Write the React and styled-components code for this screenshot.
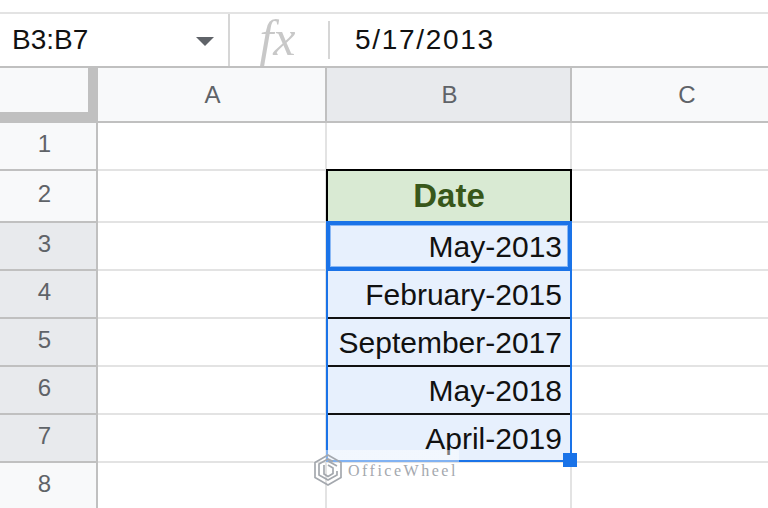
import styled, { createGlobalStyle, css } from 'styled-components';

const GlobalStyle = createGlobalStyle`
  html, body {
    margin: 0;
    height: 508px;
    overflow: hidden;
    background: #fff;
    font-family: "Liberation Sans", Arial, sans-serif;
  }
`;

const Page = styled.div`
  width: 768px;
  height: 508px;
  padding-top: 12px;
  box-sizing: border-box;
  overflow: hidden;
`;

const FormulaBar = styled.div`
  display: flex;
  align-items: center;
  height: 56px;
  box-sizing: border-box;
  border-top: 2px solid #e3e3e3;
  border-bottom: 2px solid #c0c0c0;
`;

const NameBox = styled.div`
  width: 230px;
  height: 100%;
  box-sizing: border-box;
  display: flex;
  align-items: center;
  justify-content: space-between;
  padding: 0 14px 0 12px;
  border-right: 2px solid #d6d6d6;
  font-size: 28px;
  color: #111;
`;

const Caret = styled.span`
  width: 0;
  height: 0;
  margin-top: 3px;
  border-left: 9px solid transparent;
  border-right: 9px solid transparent;
  border-top: 9px solid #5f6368;
`;

const FxLabel = styled.div`
  width: 100px;
  height: 38px;
  box-sizing: border-box;
  display: flex;
  align-items: center;
  justify-content: center;
  padding: 0 3px 5px 0;
  border-right: 2px solid #d6d6d6;
  font-family: "Liberation Serif", serif;
  font-style: italic;
  font-size: 50px;
  line-height: 38px;
  color: #c8c8c8;
`;

const FormulaValue = styled.div`
  padding-left: 25px;
  font-size: 28px;
  letter-spacing: 1.7px;
  color: #111;
`;

const Sheet = styled.div`
  position: relative;
  display: grid;
  grid-template-columns: 98px 229px 245px 230px;
  grid-template-rows: 55px 48px 52px 48px 48px 48px 48px 48px 48px;
`;

// every grid item names its own column and row, so the selection can lie over the cells
const placed = css`
  grid-column: ${(p) => p.$col};
  grid-row: ${(p) => p.$row};
  box-sizing: border-box;
`;

const Corner = styled.div`
  ${placed}
  background: #f8f9fa;
  border-right: 10px solid #c0c0c0;
  border-bottom: 11px solid #c0c0c0;
`;

const ColumnHeader = styled.div`
  ${placed}
  display: flex;
  align-items: center;
  justify-content: center;
  padding-left: 2px;
  background: ${(p) => (p.$active ? '#e8eaed' : '#f8f9fa')};
  border-right: 2px solid #c0c0c0;
  border-bottom: 2px solid #c0c0c0;
  font-size: 24px;
  color: #5f6368;
`;

const RowHeader = styled.div`
  ${placed}
  display: flex;
  align-items: center;
  justify-content: center;
  padding: 0 7px 5px 0;
  background: ${(p) => (p.$active ? '#e8eaed' : '#f8f9fa')};
  border-right: 2px solid #c0c0c0;
  border-bottom: 2px solid #c0c0c0;
  font-size: 24px;
  color: #5f6368;
`;

const Cell = styled.div`
  ${placed}
  background: #fff;
  border-right: 2px solid #e3e3e3;
  border-bottom: 2px solid #e3e3e3;
`;

const TitleCell = styled.div`
  ${placed}
  display: flex;
  align-items: center;
  justify-content: center;
  padding-bottom: 2px;
  background: #d9ead3;
  border: 2px solid #000;
  border-bottom: 0;
  margin: -2px 0 0 -1px;
  font-size: 33px;
  font-weight: bold;
  color: #38571a;
`;

const DateCell = styled.div`
  ${placed}
  display: flex;
  align-items: center;
  justify-content: flex-end;
  padding: 2px 10px 0 0;
  background: #e7f0fd;
  border-bottom: 2px solid ${(p) => (p.$last ? '#e3e3e3' : '#111')};
  font-size: 30px;
  white-space: nowrap;
  color: #111;
`;

const Selection = styled.div`
  ${placed}
  position: relative;
  margin: -2px 0 1px -1px;
  border: 2px solid #1a73e8;
  pointer-events: none;
`;

const ActiveCell = styled.div`
  ${placed}
  margin: -2px 0 0 -1px;
  border: 4px solid #1a73e8;
  pointer-events: none;
  box-shadow: inset 0 0 0 1px #8ab8f5;
`;

const Handle = styled.span`
  position: absolute;
  right: -7px;
  bottom: -7px;
  width: 14px;
  height: 14px;
  background: #1a73e8;
`;

const Watermark = styled.div`
  position: absolute;
  left: 313px;
  top: 382px;
  width: 146px;
  height: 36px;
  display: flex;
  align-items: flex-start;
  gap: 5px;
  pointer-events: none;
  background: linear-gradient(to bottom, rgba(255, 255, 255, 0.45) 12px, transparent 12px);
`;

const LogoIcon = styled.svg`
  flex-shrink: 0;
  margin-top: 3px;
`;

const WatermarkText = styled.span`
  margin-top: 13px;
  font-family: "Liberation Serif", serif;
  font-size: 16px;
  letter-spacing: 2.5px;
  line-height: 15px;
  white-space: nowrap;
  color: #a4a8ae;
`;

function WheelLogo() {
  return (
    <LogoIcon width="30" height="34" viewBox="0 0 30 34" fill="none" stroke="#a4a8ae" strokeWidth="1.7">
      <path d="M15 2 L28 9.5 V24.5 L15 32 L2 24.5 V9.5 Z" />
      <path d="M20 8.5 L15 6 L6 11 V22 L15 27 L24 22 V18" />
      <path d="M24 13 L15 8 M11 12 V21 L15 23.5 L20 20.5 V15 L15 12" />
    </LogoIcon>
  );
}

const columns = [
  { label: 'A', col: 2 },
  { label: 'B', col: 3, active: true },
  { label: 'C', col: 4 },
];

const dates = ['May-2013', 'February-2015', 'September-2017', 'May-2018', 'April-2019'];

function App() {
  return (
    <Page>
      <GlobalStyle />
      <FormulaBar>
        <NameBox>
          B3:B7
          <Caret />
        </NameBox>
        <FxLabel>fx</FxLabel>
        <FormulaValue>5/17/2013</FormulaValue>
      </FormulaBar>
      <Sheet>
        <Corner $col={1} $row={1} />
        {columns.map((c) => (
          <ColumnHeader key={c.label} $col={c.col} $row={1} $active={c.active}>
            {c.label}
          </ColumnHeader>
        ))}

        <RowHeader $col={1} $row={2}>1</RowHeader>
        <Cell $col={2} $row={2} />
        <Cell $col={3} $row={2} />
        <Cell $col={4} $row={2} />

        <RowHeader $col={1} $row={3}>2</RowHeader>
        <Cell $col={2} $row={3} />
        <TitleCell $col={3} $row={3}>Date</TitleCell>
        <Cell $col={4} $row={3} />

        {dates.map((d, i) => (
          <RowHeader key={d} $col={1} $row={i + 4} $active>{i + 3}</RowHeader>
        ))}
        {dates.map((d, i) => (
          <Cell key={d} $col={2} $row={i + 4} />
        ))}
        {dates.map((d, i) => (
          <DateCell key={d} $col={3} $row={i + 4} $last={i === dates.length - 1}>{d}</DateCell>
        ))}
        {dates.map((d, i) => (
          <Cell key={d} $col={4} $row={i + 4} />
        ))}

        <RowHeader $col={1} $row={9}>8</RowHeader>
        <Cell $col={2} $row={9} />
        <Cell $col={3} $row={9} />
        <Cell $col={4} $row={9} />

        <Selection $col={3} $row="4 / 9">
          <Handle />
        </Selection>
        <ActiveCell $col={3} $row={4} />
        <Watermark>
          <WheelLogo />
          <WatermarkText>OfficeWheel</WatermarkText>
        </Watermark>
      </Sheet>
    </Page>
  );
}

export default App;
